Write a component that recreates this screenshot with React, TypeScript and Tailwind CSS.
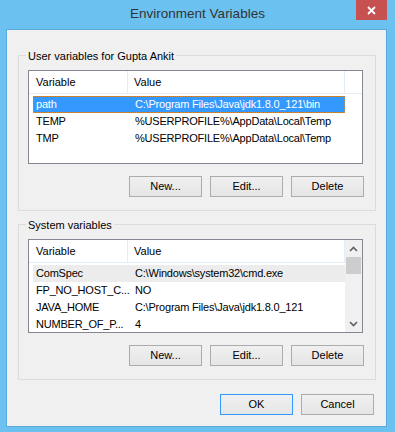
import React from 'react';

type Row = { name: string; value: string; state?: 'selected' | 'inactive' };

const userVars: Row[] = [
  { name: 'path', value: 'C:\\Program Files\\Java\\jdk1.8.0_121\\bin', state: 'selected' },
  { name: 'TEMP', value: '%USERPROFILE%\\AppData\\Local\\Temp' },
  { name: 'TMP', value: '%USERPROFILE%\\AppData\\Local\\Temp' },
];

const systemVars: Row[] = [
  { name: 'ComSpec', value: 'C:\\Windows\\system32\\cmd.exe', state: 'inactive' },
  { name: 'FP_NO_HOST_C...', value: 'NO' },
  { name: 'JAVA_HOME', value: 'C:\\Program Files\\Java\\jdk1.8.0_121' },
  { name: 'NUMBER_OF_P...', value: '4' },
];

const WinButton: React.FC<{ label: string; isDefault?: boolean }> = ({ label, isDefault }) => (
  <div
    className={`w-[73px] h-[21px] flex items-center justify-center border bg-gradient-to-b from-[#f0f0f0] to-[#e5e5e5] text-black ${
      isDefault ? 'border-[#3399ff]' : 'border-[#acacac]'
    }`}
  >
    {label}
  </div>
);

const ListRow: React.FC<{ row: Row }> = ({ row }) => {
  let cls = 'text-black border border-transparent';
  if (row.state === 'selected') cls = 'bg-[#3399ff] text-white border border-dotted border-[#d08a3a]';
  if (row.state === 'inactive') cls = 'bg-[#ececec] text-black border border-[#ececec]';
  return (
    <div className={`ml-[4px] w-[312px] h-[17px] flex items-center whitespace-nowrap tracking-[-0.2px] ${cls}`}>
      <div className="w-[96px] pl-[2px] overflow-hidden">{row.name}</div>
      <div className="flex-1 pl-[5px] overflow-hidden">{row.value}</div>
    </div>
  );
};

const ListHeader: React.FC = () => (
  <div className="h-[23px] flex items-center border-b border-[#e3ecf7] text-black">
    <div className="w-[99px] h-full flex items-center pl-[7px] border-r border-[#e3ecf7]">Variable</div>
    <div className="w-[217px] h-full flex items-center pl-[6px] border-r border-[#e3ecf7]">Value</div>
  </div>
);

const Chevron: React.FC<{ up?: boolean }> = ({ up }) => (
  <svg width="9" height="6" viewBox="0 0 9 6">
    <path
      d={up ? 'M1 5 L4.5 1.5 L8 5' : 'M1 1 L4.5 4.5 L8 1'}
      fill="none"
      stroke="#606060"
      strokeWidth="1.6"
    />
  </svg>
);

const GroupBox: React.FC<{ title: string; rows: Row[]; scroll?: boolean; className?: string }> = ({
  title,
  rows,
  scroll,
  className,
}) => (
  <div className={`relative w-[358px] border border-[#dcdcdc] pt-[14px] pl-[9px] pb-[13px] ${className || ''}`}>
    <span className="absolute left-[7px] top-[-8px] px-[2px] bg-[#f0f0f0] leading-[16px]">{title}</span>
    <div className="w-[335px] h-[94px] border border-[#828790] bg-white flex overflow-hidden">
      <div className="flex-1 overflow-hidden">
        <ListHeader />
        <div className="mt-[2px]">
          {rows.map((r) => (
            <ListRow key={r.name} row={r} />
          ))}
        </div>
      </div>
      {scroll && (
        <div className="w-[17px] h-full bg-[#f0f0f0] flex flex-col items-center">
          <div className="h-[17px] w-full flex items-center justify-center">
            <Chevron up />
          </div>
          <div className="w-[15px] h-[17px] bg-[#cdcdcd]" />
          <div className="flex-1" />
          <div className="h-[17px] w-full flex items-center justify-center">
            <Chevron />
          </div>
        </div>
      )}
    </div>
    <div className="mt-[12px] flex justify-end gap-[8px] pr-[11px]">
      <WinButton label="New..." />
      <WinButton label="Edit..." />
      <WinButton label="Delete" />
    </div>
  </div>
);

export default function App() {
  return (
    <div
      className="w-[395px] h-[432px] bg-[#6bc2f1] flex flex-col text-[11px] overflow-hidden"
      style={{ fontFamily: '"Liberation Sans", Arial, sans-serif' }}
    >
      <div className="h-[29px] relative flex items-center justify-center shrink-0">
        <span className="text-[13.5px] text-[#333333] pb-[1px]">Environment Variables</span>
        <div className="absolute right-[8px] top-0 w-[31px] h-[20px] bg-[#c75050] flex items-center justify-center">
          <svg width="9" height="9" viewBox="0 0 9 9">
            <path d="M1 1 L8 8 M8 1 L1 8" stroke="#ffffff" strokeWidth="1.8" />
          </svg>
        </div>
      </div>
      <div className="ml-[6px] w-[381px] h-[398px] border border-[#5aa8dc] bg-[#f0f0f0] pl-[11px] pt-[25px]">
        <GroupBox title="User variables for Gupta Ankit" rows={userVars} />
        <GroupBox title="System variables" rows={systemVars} scroll className="mt-[13px]" />
        <div className="mt-[14px] flex justify-end gap-[8px] pr-[12px]">
          <WinButton label="OK" isDefault />
          <WinButton label="Cancel" />
        </div>
      </div>
    </div>
  );
}
